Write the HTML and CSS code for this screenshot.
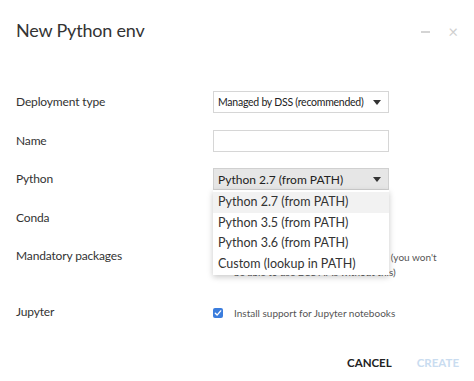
FILE: index.html
```html
<!DOCTYPE html>
<html lang="en">
<head>
    <meta charset="UTF-8">
    <title>New Python env</title>
    <link rel="stylesheet" href="styles.css">
</head>
<body>

    <div class="modal">
        <div class="modal-header">
            <h1>New Python env</h1>
            <div class="window-tools">
                <span class="tool-min"></span>
                <span class="tool-close">&times;</span>
            </div>
        </div>

        <form class="modal-body">
            <div class="row">
                <label>Deployment type</label>
                <div class="select select-narrow">
                    <span>Managed by DSS (recommended)</span>
                    <svg class="caret" width="8" height="5" viewBox="0 0 8 5"><path d="M0 0h8L4 5z"/></svg>
                </div>
            </div>

            <div class="row">
                <label>Name</label>
                <div class="input"></div>
            </div>

            <div class="row">
                <label>Python</label>
                <div class="select select-open">
                    <span>Python 2.7 (from PATH)</span>
                    <svg class="caret" width="8" height="5" viewBox="0 0 8 5"><path d="M0 0h8L4 5z"/></svg>

                    <!-- menu ouvert -->
                    <ul class="menu">
                        <li class="active">Python 2.7 (from PATH)</li>
                        <li>Python 3.5 (from PATH)</li>
                        <li>Python 3.6 (from PATH)</li>
                        <li>Custom (lookup in PATH)</li>
                    </ul>
                </div>
            </div>

            <div class="row">
                <label>Conda</label>
                <div class="check">
                    <span class="box"></span>
                    <span class="check-text">Use Conda</span>
                </div>
            </div>

            <div class="row row-tall">
                <label>Mandatory packages</label>
                <div class="check">
                    <span class="box"></span>
                    <span class="check-text">Install mandatory packages for DSS (you won't<br>be able to use DSS APIs without this)</span>
                </div>
            </div>

            <div class="row">
                <label>Jupyter</label>
                <div class="check">
                    <span class="box checked">
                        <svg width="10" height="10" viewBox="0 0 10 10"><path d="M2.3 5.2l1.8 1.9 3.6-4.2" fill="none" stroke="#fff" stroke-width="1.4" stroke-linecap="round" stroke-linejoin="round"/></svg>
                    </span>
                    <span class="check-text">Install support for Jupyter notebooks</span>
                </div>
            </div>
        </form>

        <div class="modal-footer">
            <button class="btn-cancel">Cancel</button>
            <button class="btn-create" disabled>Create</button>
        </div>
    </div>

</body>
</html>
```

FILE: styles.css
```css
/* page de base */
body {
    margin: 0;
    padding: 0;
    background-color: #fff;
    color: #333;
    font-family: 'Lato', 'Liberation Sans', sans-serif;
}

.modal {
    width: 474px;
    height: 381px;
    position: relative;
}

/* en-tête */
.modal-header {
    display: flex;
    align-items: center;
    justify-content: space-between;
    padding: 18px 16px 0 16px;
    height: 24px;
}

h1 {
    margin: 0;
    font-size: 18px;
    font-weight: 400;
    letter-spacing: -0.2px;
    color: #333;
    line-height: 24px;
}

.window-tools {
    display: flex;
    align-items: center;
    gap: 18px;
    margin-top: 4px;
}

.tool-min {
    display: block;
    width: 9px;
    height: 2px;
    background-color: #d4d4d4;
}

.tool-close {
    font-size: 17px;
    line-height: 16px;
    color: #d0d0d0;
}

/* formulaire */
.modal-body {
    padding: 49px 16px 0 16px;
    margin: 0;
}

.row {
    display: flex;
    align-items: flex-start;
    margin-bottom: 16.5px;
}

.row-tall {
    margin-bottom: 21px;
}

.row label {
    width: 197px;
    flex-shrink: 0;
    font-size: 12px;
    letter-spacing: -0.15px;
    line-height: 22px;
    color: #333;
}

.select,
.input {
    position: relative;
    box-sizing: border-box;
    width: 176px;
    height: 22px;
    border: 1px solid #d6d6d6;
    background-color: #fff;
}

.select {
    display: flex;
    align-items: center;
    justify-content: space-between;
    padding: 0 7px 0 4px;
    font-size: 12px;
    color: #222;
    white-space: nowrap;
}

.select-narrow {
    font-size: 10.5px;
    letter-spacing: -0.25px;
}

.select-open {
    background-color: #e6e6e6;
    border-color: #d0d0d0;
}

.caret {
    fill: #333;
    margin-top: 1px;
    flex-shrink: 0;
}

.menu {
    position: absolute;
    top: 21px;
    left: -1px;
    width: 176px;
    margin: 0;
    padding: 2px 0 1px 0;
    list-style: none;
    background-color: #fff;
    box-shadow: 0 2px 6px rgba(0, 0, 0, 0.22);
    z-index: 10;
}

.menu li {
    height: 20.5px;
    line-height: 20.5px;
    padding: 0 5px;
    font-size: 12.5px;
    color: #333;
}

.menu li.active {
    background-color: #f2f2f2;
}

/* cases à cocher */
.check {
    display: flex;
    align-items: flex-start;
    padding-top: 5px;
}

.box {
    display: block;
    box-sizing: border-box;
    width: 10px;
    height: 10px;
    margin-top: 2px;
    margin-right: 11px;
    border: 1px solid #bbb;
    border-radius: 2px;
    flex-shrink: 0;
}

.box.checked {
    border: none;
    background-color: #3b7ddd;
}

.box svg {
    display: block;
}

.check-text {
    width: 210px;
    font-size: 10px;
    line-height: 15px;
    color: #555;
    white-space: nowrap;
}

/* boutons */
.modal-footer {
    position: absolute;
    right: 15px;
    bottom: 12px;
    display: flex;
    gap: 25px;
}

.modal-footer button {
    padding: 0;
    border: none;
    background: none;
    font-family: inherit;
    font-size: 11.5px;
    font-weight: 700;
    text-transform: uppercase;
    cursor: pointer;
}

.btn-cancel {
    color: #222;
}

.btn-create {
    color: #c9dcf0;
}
```
